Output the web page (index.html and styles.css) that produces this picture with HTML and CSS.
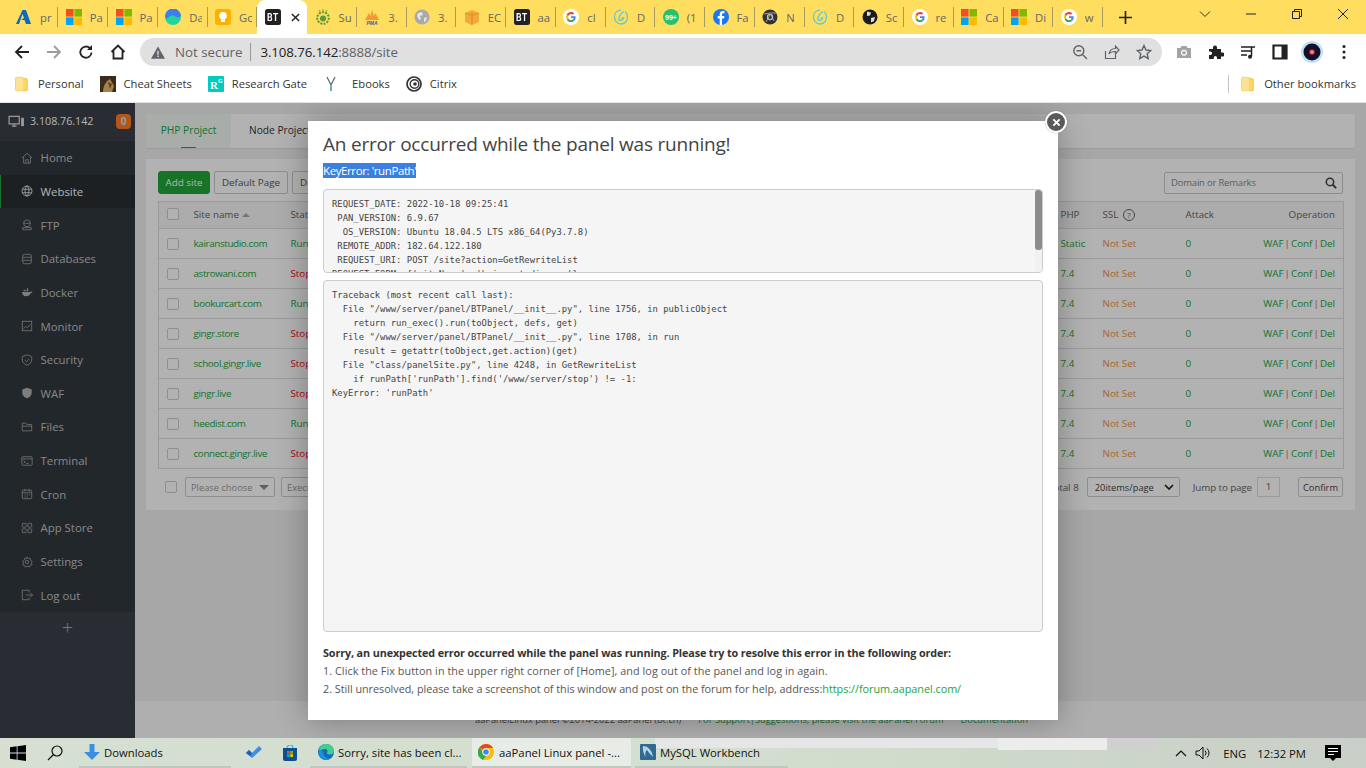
FILE: index.html
```html
<!DOCTYPE html>
<html lang="en">
<head>
<meta charset="utf-8">
<title>aaPanel Linux panel</title>
<link rel="stylesheet" href="styles.css">
</head>
<body>
<svg class="defs" width="0" height="0" aria-hidden="true">
  <symbol id="ms" viewBox="0 0 16 16"><rect x="0" y="0" width="7.6" height="7.6" fill="#f25022"/><rect x="8.4" y="0" width="7.6" height="7.6" fill="#7fba00"/><rect x="0" y="8.4" width="7.6" height="7.6" fill="#00a4ef"/><rect x="8.4" y="8.4" width="7.6" height="7.6" fill="#ffb900"/></symbol>
  <symbol id="google" viewBox="0 0 16 16"><circle cx="8" cy="8" r="8" fill="#fff"/><path d="M12.6 8.2c0-.4 0-.7-.1-1H8v1.9h2.6c-.1.7-.5 1.200-1 1.600l1.500 1.200c.9-.8 1.500-2.100 1.500-3.700z" fill="#4285f4"/><path d="M8 13c1.300 0 2.400-.4 3.100-1.100L9.600 10.700c-.4.300-1 .5-1.600.5-1.300 0-2.300-.8-2.700-2l-1.600 1.200C4.500 12 6.100 13 8 13z" fill="#34a853"/><path d="M5.300 9.200c-.2-.7-.2-1.500 0-2.200L3.700 5.700c-.7 1.400-.7 3.200 0 4.600z" fill="#fbbc05"/><path d="M8 5c.7 0 1.300.2 1.800.7l1.400-1.400C10.300 3.500 9.200 3 8 3 6.100 3 4.500 4.100 3.700 5.700L5.300 7C5.700 5.800 6.700 5 8 5z" fill="#ea4335"/></symbol>
  <symbol id="bt" viewBox="0 0 16 16"><rect width="16" height="16" rx="2.500" fill="#222"/><path d="M2.500 4v8h2.800c1.200 0 1.900-.8 1.900-2.100 0-1-.4-1.600-1-1.900.5-.3.800-.8.800-1.800C7 4.800 6.300 4 5.200 4zM3.800 5.200h1.200c.5 0 .8.400.8 1s-.3 1.200-.8 1.200H3.800zm0 3.400h1.300c.6 0 .9.400.9 1.200 0 .7-.3 1.100-.9 1.100H3.800zM8 4v1.200h1.900V12h1.300V5.200h1.900V4z" fill="#fff"/></symbol>
  <symbol id="teal" viewBox="0 0 16 16"><path d="M8 1.200C4 1.200 1.500 4.200 1.500 8S4.200 15 8 15s6.500-3 6.500-7c0-2.200-1-4.200-2.500-5.500" fill="none" stroke="#65c9cf" stroke-width="1.300"/><path d="M10.800 2.500C7.800 4.500 5.600 7.500 6 11c1.800 1 4 .3 4.500-2.200L8.500 9.600" fill="none" stroke="#65c9cf" stroke-width="1.300"/></symbol>
  <symbol id="folder" viewBox="0 0 14 18"><path d="M.5 2.500a1 1 0 0 1 1-1h7l1 1.500h3a1 1 0 0 1 1 1v11.500a1 1 0 0 1-1 1h-11a1 1 0 0 1-1-1z" fill="#fdd663" stroke="#e8c04a"/><path d="M.5 1.500h8v15h-8z" fill="#fde293"/></symbol>
</svg>

<header class="tabstrip">
  <div class="tab"><svg class="fav" viewBox="0 0 16 16"><path d="M6.500 1h3.500l5 14H10L8.500 11H5l3-2-1.500-4L3 15H0z" fill="#0c68c4"/></svg><span class="tab-t">pr</span></div>
  <div class="tab"><svg class="fav"><use href="#ms"/></svg><span class="tab-t">Pa</span></div>
  <div class="tab"><svg class="fav"><use href="#ms"/></svg><span class="tab-t">Pa</span></div>
  <div class="tab"><svg class="fav" viewBox="0 0 16 16"><circle cx="8" cy="8" r="8" fill="#22d39b"/><path d="M0 8a8 8 0 0 1 16-1c-2 1.500-3.500 2-5.500.5S6 6 4 8s-3 1.500-4 0z" fill="#3f7ef0"/></svg><span class="tab-t">Da</span></div>
  <div class="tab"><svg class="fav" viewBox="0 0 16 16"><rect width="16" height="16" rx="3" fill="#fbb100"/><circle cx="8" cy="6.800" r="3.800" fill="#fff"/><rect x="6" y="10.500" width="4" height="2.500" fill="#fff"/></svg><span class="tab-t">Gc</span></div>
  <div class="tab active"><svg class="fav"><use href="#bt"/></svg><svg class="tab-x" viewBox="0 0 10 10"><path d="M1 1l8 8M9 1l-8 8" stroke="#222" stroke-width="1.600"/></svg></div>
  <div class="tab"><svg class="fav" viewBox="0 0 16 16"><circle cx="8" cy="9" r="5.800" fill="none" stroke="#5a9a3a" stroke-width="2" stroke-dasharray="2 1.200"/><circle cx="8" cy="9.500" r="3" fill="#5a9a3a"/><path d="M4 1l2 3M8 0v4M12 1l-2 3" stroke="#7ab648" stroke-width="1.200"/></svg><span class="tab-t">Su</span></div>
  <div class="tab"><svg class="fav" viewBox="0 0 16 16"><path d="M1 11L5 4l1.500 3L8 1l2 6 1.500-3 3.500 7z" fill="#f4973b"/><text class="pma" x="8" y="15.500">PMA</text></svg><span class="tab-t">3.</span></div>
  <div class="tab"><svg class="fav" viewBox="0 0 16 16"><circle cx="8" cy="8" r="7.500" fill="#a9a9a9"/><path d="M4 4l4-1 1 3-3 1 1 3-2 1-2-4zM10 9l3-1-1 4-2 1z" fill="#e4e4e4"/></svg><span class="tab-t">3.</span></div>
  <div class="tab"><svg class="fav" viewBox="0 0 16 16"><path d="M1 4l7-3 7 3v9l-7 3-7-3z" fill="#f2a93b"/><path d="M8 4v12" stroke="#d98a1d" stroke-width="1"/><path d="M1 4l7 2.500L15 4" fill="none" stroke="#d98a1d" stroke-width=".8"/></svg><span class="tab-t">EC</span></div>
  <div class="tab"><svg class="fav"><use href="#bt"/></svg><span class="tab-t">aa</span></div>
  <div class="tab"><svg class="fav"><use href="#google"/></svg><span class="tab-t">cl</span></div>
  <div class="tab"><svg class="fav"><use href="#teal"/></svg><span class="tab-t">D</span></div>
  <div class="tab"><svg class="fav" viewBox="0 0 16 16"><circle cx="8" cy="8" r="8" fill="#25c16f"/><text class="fav-99" x="8" y="10.500">99+</text></svg><span class="tab-t">(1</span></div>
  <div class="tab"><svg class="fav" viewBox="0 0 16 16"><circle cx="8" cy="8" r="8" fill="#1877f2"/><path d="M9 16V9.500h2l.4-2.500H9V5.500C9 4.800 9.300 4.300 10.300 4.300h1.200V2.200C11.200 2.100 10.500 2 9.800 2 8 2 6.700 3.100 6.700 5.200V7H4.700v2.500h2V16z" fill="#fff"/></svg><span class="tab-t">Fa</span></div>
  <div class="tab"><svg class="fav" viewBox="0 0 16 16"><circle cx="8" cy="8" r="7.500" fill="#333"/><circle cx="8" cy="8" r="3.200" fill="#bbb"/><circle cx="8" cy="8" r="2" fill="#333"/><path d="M2 5l6-1h6M4 13l4-7M12 12l-3-6" stroke="#bbb" stroke-width=".8" fill="none"/></svg><span class="tab-t">N</span></div>
  <div class="tab"><svg class="fav"><use href="#teal"/></svg><span class="tab-t">D</span></div>
  <div class="tab"><svg class="fav" viewBox="0 0 16 16"><circle cx="8" cy="8" r="7.500" fill="#1c1c1c"/><path d="M5 2.500l4 1-1 3-3 .5zM9 9l4-1-1 4-3 1.500z" fill="#ddd"/></svg><span class="tab-t">Sc</span></div>
  <div class="tab"><svg class="fav"><use href="#google"/></svg><span class="tab-t">re</span></div>
  <div class="tab"><svg class="fav"><use href="#ms"/></svg><span class="tab-t">Ca</span></div>
  <div class="tab"><svg class="fav"><use href="#ms"/></svg><span class="tab-t">Di</span></div>
  <div class="tab"><svg class="fav"><use href="#google"/></svg><span class="tab-t">w</span></div>
  <svg class="newtab" viewBox="0 0 14 14"><path d="M7 0v14M0 7h14" stroke="#222" stroke-width="1.800"/></svg>
  <div class="winctl">
    <svg class="wc" viewBox="0 0 12 12"><path d="M1 3.500l5 5 5-5" fill="none" stroke="#333" stroke-width="1"/></svg>
    <svg class="wc" viewBox="0 0 12 12"><path d="M1 6h10" stroke="#222" stroke-width="1"/></svg>
    <svg class="wc" viewBox="0 0 12 12"><path d="M1.500 3.500h7v7h-7zM3.500 3.500v-2h7v7h-2" fill="none" stroke="#222" stroke-width="1"/></svg>
    <svg class="wc" viewBox="0 0 12 12"><path d="M1 1l10 10M11 1L1 11" stroke="#222" stroke-width="1"/></svg>
  </div>
</header>

<nav class="toolbar">
  <svg class="tb" viewBox="0 0 16 16"><path d="M15 8H2M8 2L2 8l6 6" fill="none" stroke="#222" stroke-width="1.800"/></svg>
  <svg class="tb" viewBox="0 0 16 16"><path d="M1 8h13M8 2l6 6-6 6" fill="none" stroke="#9c9c9c" stroke-width="1.800"/></svg>
  <svg class="tb" viewBox="0 0 16 16"><path d="M13.500 8.500a5.600 5.600 0 1 1-1.600-4.300" fill="none" stroke="#222" stroke-width="1.800"/><path d="M14 1v5H9z" fill="#222"/></svg>
  <svg class="tb" viewBox="0 0 16 16"><path d="M1.500 8L8 1.500 14.500 8M3.500 7v7.500h9V7" fill="none" stroke="#222" stroke-width="1.800"/></svg>
  <div class="omnibox">
    <svg class="warn" viewBox="0 0 16 14"><path d="M8 0l8 14H0z" fill="#5f6368"/><path d="M7.200 5h1.600v4.500H7.200zM7.200 10.500h1.600V12H7.200z" fill="#e0e0e0"/></svg>
    <span class="ns">Not secure</span>
    <span class="sep"></span>
    <span class="url"><b class="host">3.108.76.142</b>:8888/site</span>
    <span class="grow"></span>
    <svg class="om" viewBox="0 0 16 16"><circle cx="6.800" cy="6.800" r="5" fill="none" stroke="#5f6368" stroke-width="1.400"/><path d="M10.500 10.500L15 15M4.500 6.800h4.600" stroke="#5f6368" stroke-width="1.400"/></svg>
    <svg class="om" viewBox="0 0 16 16"><path d="M1.500 7v7.500h10V10M5 10c.5-3.500 3-5.500 6.500-5.500V2L15 6l-3.500 4V7.500C9 7.500 6.500 8 5 10z" fill="none" stroke="#5f6368" stroke-width="1.200"/></svg>
    <svg class="om" viewBox="0 0 16 16"><path d="M8 1.500l2 4.500 4.800.5-3.600 3.200 1 4.800L8 12.100l-4.200 2.400 1-4.800L1.200 6.500 6 6z" fill="none" stroke="#5f6368" stroke-width="1.400"/></svg>
  </div>
  <div class="exts">
    <svg class="ex" viewBox="0 0 16 16"><path d="M1 4h3.500l1-2h5l1 2H15v10H1z" fill="#a3a3a3"/><circle cx="8" cy="8.800" r="3" fill="#fff"/><circle cx="8" cy="8.800" r="1.800" fill="#a3a3a3"/></svg>
    <svg class="ex" viewBox="0 0 16 16"><path d="M1 5h4V3.500a2 2 0 0 1 4 0V5h4v3.500h1.500a2 2 0 0 1 0 4H13V15H9v-1.500a1.600 1.600 0 0 0-3.200 0V15H1v-4h1.300a1.800 1.800 0 0 0 0-3.600H1z" fill="#202124"/></svg>
    <svg class="ex" viewBox="0 0 16 16"><path d="M1 3h10M1 7h10M1 11h6" stroke="#202124" stroke-width="1.500"/><path d="M11.500 12.500V3H15" fill="none" stroke="#202124" stroke-width="1.500"/><circle cx="10" cy="12.800" r="2" fill="#202124"/></svg>
    <svg class="ex" viewBox="0 0 16 16"><path d="M1.500 1.500h13v13h-13z" fill="#fff" stroke="#202124" stroke-width="2.200"/><path d="M9.500 1.500h5v13h-5z" fill="#202124"/></svg>
    <svg class="ex" viewBox="0 0 22 22"><circle cx="11" cy="11" r="11" fill="#bfe0f5"/><circle cx="11" cy="11" r="8.500" fill="#15102a"/><circle cx="11" cy="11" r="2.600" fill="#f04a4a"/><circle cx="11" cy="11" r=".8" fill="#fff"/></svg>
    <svg class="ex" viewBox="0 0 16 16"><circle cx="8" cy="2.500" r="1.500" fill="#202124"/><circle cx="8" cy="8" r="1.500" fill="#202124"/><circle cx="8" cy="13.500" r="1.500" fill="#202124"/></svg>
  </div>
</nav>

<nav class="bookmarks">
  <a class="bm"><svg class="bm-i"><use href="#folder"/></svg>Personal</a>
  <a class="bm"><svg class="bm-i" viewBox="0 0 16 16"><rect width="16" height="16" fill="#3a2c1c"/><path d="M3 16c0-6 3-11 7-13l4 7-2 6z" fill="#a88148"/><path d="M8 6l4 2-2 5z" fill="#5e4526"/></svg>Cheat Sheets</a>
  <a class="bm"><svg class="bm-i" viewBox="0 0 16 16"><rect width="16" height="16" rx="1" fill="#00ccbb"/><text class="rg" x="2" y="13">R</text><text class="rg-s" x="10" y="7">G</text></svg>Research Gate</a>
  <a class="bm bm-v"><svg class="bm-i" viewBox="0 0 16 16"><path d="M4 1l4 8 4-8M8 9v6" fill="none" stroke="#566" stroke-width="1.200"/><path d="M8 11v4" stroke="#4ab0d9" stroke-width="1.500"/></svg>Ebooks</a>
  <a class="bm"><svg class="bm-i" viewBox="0 0 16 16"><circle cx="8" cy="8" r="7" fill="none" stroke="#333" stroke-width="1.700"/><circle cx="8.500" cy="8" r="4.300" fill="none" stroke="#333" stroke-width="1.400"/><circle cx="9" cy="8" r="1.800" fill="#333"/></svg>Citrix</a>
  <span class="grow"></span>
  <span class="bm-sep"></span>
  <a class="bm bm-other"><svg class="bm-i"><use href="#folder"/></svg>Other bookmarks</a>
</nav>

<div class="page">
  <aside class="sidebar">
    <div class="side-head">
      <svg class="side-mon" viewBox="0 0 18 14"><path d="M1 1.500h11v8H1zM4 12h5M6.500 9.500V12" fill="none" stroke="#ddd" stroke-width="1.300"/><path d="M14 3h3v9h-3z" fill="#ddd"/></svg>
      <span class="side-ip">3.108.76.142</span>
      <span class="badge">0</span>
    </div>
    <ul class="menu">
      <li class="mi"><svg class="mi-i" viewBox="0 0 14 14"><path d="M1 7l6-5.500L13 7M3 6v7h8V6M5.500 13V9h3v4"/></svg>Home</li>
      <li class="mi on"><svg class="mi-i" viewBox="0 0 14 14"><circle cx="7" cy="7" r="5.800"/><path d="M1.500 5h11M1.500 9h11M7 1c-3 3-3 9 0 12M7 1c3 3 3 9 0 12"/></svg>Website</li>
      <li class="mi"><svg class="mi-i" viewBox="0 0 14 14"><circle cx="7" cy="5" r="4"/><path d="M3 5h8M2 10h10v2.500H2zM7 9v1"/></svg>FTP</li>
      <li class="mi"><svg class="mi-i" viewBox="0 0 14 14"><rect x="2" y="1.500" width="10" height="11" rx="2"/><path d="M2 5h10M2 8.500h10"/></svg>Databases</li>
      <li class="mi"><svg class="mi-i solid" viewBox="0 0 14 14"><path d="M1 7h10.500c.5-.8 1-1 1.800-.8-.3 1.500-1 2-1.800 2-1 2.500-3 3.800-6 3.800C3 12 1.500 10 1 7z"/><path d="M3 4.500h1.500V6H3zM5 4.500h1.500V6H5zM7 4.500h1.500V6H7zM7 2.500h1.500V4H7z"/></svg>Docker</li>
      <li class="mi"><svg class="mi-i" viewBox="0 0 14 14"><rect x="1.500" y="1.500" width="11" height="11"/><path d="M3 10l2.500-2.500 2 1.500L11 5"/></svg>Monitor</li>
      <li class="mi"><svg class="mi-i" viewBox="0 0 14 14"><path d="M7 1l5.500 2v4c0 3-2.500 5-5.500 6-3-1-5.500-3-5.500-6V3z"/><path d="M4.500 6.800L6.500 9l3-3.500"/></svg>Security</li>
      <li class="mi"><svg class="mi-i solid" viewBox="0 0 14 14"><path d="M7 .8l5.500 2v4.200c0 3-2.500 5-5.500 6.200-3-1.200-5.500-3.200-5.500-6.200V2.800z"/></svg>WAF</li>
      <li class="mi"><svg class="mi-i" viewBox="0 0 14 14"><path d="M1.500 11.500v-9h4l1.500 1.500h5.500v7.500zM1.500 6h11"/></svg>Files</li>
      <li class="mi"><svg class="mi-i" viewBox="0 0 14 14"><rect x="1" y="2" width="12" height="10" rx="1"/><path d="M1 4.500h12M3 6.500l2 1.500-2 1.500M6 10h3"/></svg>Terminal</li>
      <li class="mi"><svg class="mi-i" viewBox="0 0 14 14"><rect x="1.500" y="2.500" width="11" height="10" rx="1"/><path d="M1.500 5.500h11M4.500 1v3M9.500 1v3M4 8h1.500M6.500 8H8M9 8h1.500M4 10.500h1.500M6.500 10.500H8"/></svg>Cron</li>
      <li class="mi"><svg class="mi-i" viewBox="0 0 14 14"><rect x="1.500" y="1.500" width="4.500" height="4.500" rx=".8"/><rect x="8" y="1.500" width="4.500" height="4.500" rx=".8"/><rect x="1.500" y="8" width="4.500" height="4.500" rx=".8"/><rect x="8" y="8" width="4.500" height="4.500" rx=".8"/></svg>App Store</li>
      <li class="mi"><svg class="mi-i" viewBox="0 0 14 14"><path d="M7 1l1.300 1.800 2.200-.3.600 2.200 1.900 1.300-1 2 1 2-2.100.6-.8 2.100L7 12l-2 1-.9-2.100L2 10.300l.9-2.100-1-2 1.900-1.300.6-2.200 2.200.3z"/><circle cx="7" cy="7" r="2"/></svg>Settings</li>
      <li class="mi"><svg class="mi-i" viewBox="0 0 14 14"><path d="M9.500 4V1.500h-8v11h8V10M5.500 7h8M11 4.500L13.500 7 11 9.500"/></svg>Log out</li>
    </ul>
    <div class="side-add">+</div>
  </aside>

  <main class="main">
    <div class="content">
      <div class="ptabs">
        <span class="ptab on">PHP Project</span>
        <span class="ptab">Node Project</span>
      </div>
      <section class="panel">
        <div class="ctrl">
          <button class="btn primary">Add site</button>
          <button class="btn">Default Page</button>
          <button class="btn">Default Site</button>
          <span class="grow"></span>
          <div class="search"><span>Domain or Remarks</span><svg class="search-i" viewBox="0 0 14 14"><circle cx="5.800" cy="5.800" r="4.300" fill="none" stroke="#444" stroke-width="1.800"/><path d="M9 9l4 4" stroke="#444" stroke-width="2.200"/></svg></div>
        </div>
        <table class="sites">
          <colgroup><col class="c1"><col class="c2"><col class="c3"><col class="c4"><col class="c5"><col class="c6"><col class="c7"></colgroup>
          <thead>
            <tr><th><span class="cb"></span></th><th>Site name <span class="sort"></span></th><th>Status</th><th>PHP</th><th>SSL <span class="q">?</span></th><th>Attack</th><th class="r">Operation</th></tr>
          </thead>
          <tbody>
            <tr><td><span class="cb"></span></td><td class="g">kairanstudio.com</td><td class="g">Running</td><td class="g">Static</td><td class="o">Not Set</td><td class="g">0</td><td class="r g">WAF <i>|</i> Conf <i>|</i> Del</td></tr>
            <tr><td><span class="cb"></span></td><td class="g">astrowani.com</td><td class="red">Stopped</td><td class="g">7.4</td><td class="o">Not Set</td><td class="g">0</td><td class="r g">WAF <i>|</i> Conf <i>|</i> Del</td></tr>
            <tr><td><span class="cb"></span></td><td class="g">bookurcart.com</td><td class="g">Running</td><td class="g">7.4</td><td class="o">Not Set</td><td class="g">0</td><td class="r g">WAF <i>|</i> Conf <i>|</i> Del</td></tr>
            <tr><td><span class="cb"></span></td><td class="g">gingr.store</td><td class="red">Stopped</td><td class="g">7.4</td><td class="o">Not Set</td><td class="g">0</td><td class="r g">WAF <i>|</i> Conf <i>|</i> Del</td></tr>
            <tr><td><span class="cb"></span></td><td class="g">school.gingr.live</td><td class="red">Stopped</td><td class="g">7.4</td><td class="o">Not Set</td><td class="g">0</td><td class="r g">WAF <i>|</i> Conf <i>|</i> Del</td></tr>
            <tr><td><span class="cb"></span></td><td class="g">gingr.live</td><td class="red">Stopped</td><td class="g">7.4</td><td class="o">Not Set</td><td class="g">0</td><td class="r g">WAF <i>|</i> Conf <i>|</i> Del</td></tr>
            <tr><td><span class="cb"></span></td><td class="g">heedist.com</td><td class="g">Running</td><td class="g">7.4</td><td class="o">Not Set</td><td class="g">0</td><td class="r g">WAF <i>|</i> Conf <i>|</i> Del</td></tr>
            <tr><td><span class="cb"></span></td><td class="g">connect.gingr.live</td><td class="red">Stopped</td><td class="g">7.4</td><td class="o">Not Set</td><td class="g">0</td><td class="r g">WAF <i>|</i> Conf <i>|</i> Del</td></tr>
          </tbody>
        </table>
        <div class="pager">
          <span class="cb pager-cb"></span>
          <span class="sel choose">Please choose<span class="caret"></span></span>
          <span class="sel exec">Execute</span>
          <span class="grow"></span>
          <span class="total">Total 8</span>
          <span class="sel per">20items/page<svg class="chev" viewBox="0 0 10 6"><path d="M1 1l4 4 4-4" fill="none" stroke="#222" stroke-width="1.700"/></svg></span>
          <span class="jump">Jump to page</span>
          <span class="pg">1</span>
          <span class="btn confirm">Confirm</span>
        </div>
      </section>
    </div>
    <footer class="foot">
      <span>aaPanelLinux panel ©2014-2022 aaPanel (bt.cn)</span>
      <a class="g">For Support|Suggestions, please visit the aaPanel Forum</a>
      <a class="g">Documentation</a>
    </footer>
  </main>

  <div class="shade"></div>

  <div class="modal">
    <button class="close" aria-label="Close"><svg viewBox="0 0 10 10"><path d="M1.500 1.500l7 7M8.500 1.500l-7 7" stroke="#fff" stroke-width="2"/></svg></button>
    <h1 class="m-title">An error occurred while the panel was running!</h1>
    <p class="m-key"><mark class="m-sel">KeyError: 'runPath'</mark></p>
    <div class="pre pre-a">
<pre class="code">REQUEST_DATE: 2022-10-18 09:25:41
 PAN_VERSION: 6.9.67
  OS_VERSION: Ubuntu 18.04.5 LTS x86_64(Py3.7.8)
 REMOTE_ADDR: 182.64.122.180
 REQUEST_URI: POST /site?action=GetRewriteList
REQUEST_FORM: {'siteName': 'kairanstudio.com'}</pre>
      <div class="scroll"><div class="thumb"></div></div>
    </div>
    <div class="pre pre-b">
<pre class="code">Traceback (most recent call last):
  File "/www/server/panel/BTPanel/__init__.py", line 1756, in publicObject
    return run_exec().run(toObject, defs, get)
  File "/www/server/panel/BTPanel/__init__.py", line 1708, in run
    result = getattr(toObject,get.action)(get)
  File "class/panelSite.py", line 4248, in GetRewriteList
    if runPath['runPath'].find('/www/server/stop') != -1:
KeyError: 'runPath'</pre>
    </div>
    <div class="m-help">
      <p class="strong">Sorry, an unexpected error occurred while the panel was running. Please try to resolve this error in the following order:</p>
      <p class="line2">1. Click the Fix button in the upper right corner of [Home], and log out of the panel and log in again.</p>
      <p class="line3">2. Still unresolved, please take a screenshot of this window and post on the forum for help, address:<a class="m-link">https://forum.aapanel.com/</a></p>
    </div>
  </div>
</div>

<footer class="taskbar">
  <div class="tk win"><svg class="tk-i" viewBox="0 0 16 16"><path d="M0 2.300l6.700-1v6.300H0zM7.500 1.200L16 0v7.600H7.500zM0 8.400h6.700v6.300l-6.700-1zM7.500 8.400H16V16l-8.500-1.200z" fill="#000"/></svg></div>
  <div class="tk srch"><svg class="tk-i" viewBox="0 0 16 16"><circle cx="10" cy="6" r="5" fill="none" stroke="#111" stroke-width="1.200"/><path d="M6.500 9.500L1 15" stroke="#111" stroke-width="1.300"/></svg></div>
  <div class="tk dl"><svg class="tk-i" viewBox="0 0 16 16"><path d="M5.500 0h5v8H16l-8 8-8-8h5.500z" fill="#3b8fe0"/></svg>Downloads</div>
  <div class="tk pin"><svg class="tk-i" viewBox="0 0 16 16"><path d="M0 8l3-3 3 3 7-7 3 3-10 9z" fill="#3b8fe0"/><path d="M0 8l3-3 3 3-2 3z" fill="#1d5fb8"/></svg></div>
  <div class="tk pin"><svg class="tk-i" viewBox="0 0 16 16"><path d="M1 3h14v11a2 2 0 0 1-2 2H3a2 2 0 0 1-2-2z" fill="#0f4f8f"/><path d="M5 3a3 3 0 0 1 6 0" fill="none" stroke="#38b6d8" stroke-width="1.200"/><rect x="5" y="6" width="2.800" height="2.800" fill="#f25022"/><rect x="8.200" y="6" width="2.800" height="2.800" fill="#7fba00"/><rect x="5" y="9.200" width="2.800" height="2.800" fill="#00a4ef"/><rect x="8.200" y="9.200" width="2.800" height="2.800" fill="#ffb900"/></svg></div>
  <div class="tk app edge"><svg class="tk-i" viewBox="0 0 16 16"><circle cx="8" cy="8" r="8" fill="#0f6cbd"/><path d="M1 6C2 2 5 0 8 0c4.500 0 8 3 8 7 0 2.500-2 3.500-4 3.500-1.500 0-3-.5-3.200-1.300C10 8 10 5 7 5 4 5 2 7 1 6z" fill="#3fd08f"/><path d="M5.500 9c0 3 3 6 6.500 5.500-2 1.500-5 2-7.500.5S.5 10 1 7c.5-1.500 3-2 4.500 2z" fill="#1a90d9"/></svg>Sorry, site has been cl...</div>
  <div class="tk app chrome"><svg class="tk-i" viewBox="0 0 16 16"><circle cx="8" cy="8" r="8" fill="#fbbc05"/><path d="M8 0a8 8 0 0 1 7 4H8a4 4 0 0 0-3.500 2L1.800 3A8 8 0 0 1 8 0z" fill="#ea4335"/><path d="M1.800 3l3.500 6.500A4 4 0 0 0 8 12l-3 4A8 8 0 0 1 1.800 3z" fill="#34a853"/><circle cx="8" cy="8" r="3.700" fill="#fff"/><circle cx="8" cy="8" r="2.800" fill="#4285f4"/></svg>aaPanel Linux panel -...</div>
  <div class="tk app mysql"><svg class="tk-i" viewBox="0 0 16 16"><rect width="16" height="16" rx="1" fill="#2e6a92"/><path d="M3 2c5 0 9 4 10 11-3-3-4-4-6-7-1.500 1-2 3-1.500 7C3 9 2.500 5 3 2z" fill="#b8d0e0"/></svg>MySQL Workbench</div>
  <span class="grow"></span>
  <div class="tray">
    <svg class="tr-up" viewBox="0 0 12 8"><path d="M1 7l5-5 5 5" fill="none" stroke="#111" stroke-width="1.200"/></svg>
    <svg class="tr-sp" viewBox="0 0 16 16"><path d="M1 6h3l4-4v12l-4-4H1z" fill="none" stroke="#111"/><path d="M10 5.500a3.500 3.500 0 0 1 0 5M12 3.500a6 6 0 0 1 0 9" fill="none" stroke="#111"/></svg>
    <span class="eng">ENG</span>
    <span class="clock">12:32 PM</span>
    <svg class="tr-n" viewBox="0 0 16 16"><path d="M0 0h16v13h-5l-3 3-3-3H0z" fill="#000"/><path d="M3 3.500h10M3 6.500h10M3 9.500h6" stroke="#fff"/></svg>
  </div>
  <div class="strip"><span class="s1"></span><span class="s2"></span><span class="s3"></span></div>
</footer>
</body>
</html>
```

FILE: styles.css
```css
* { box-sizing: border-box; }
html, body { margin: 0; padding: 0; height: 768px; overflow: hidden; }
body { font-family: "Open Sans", "Noto Sans", sans-serif; background: #fff; color: #333; }
.defs { position: absolute; }
.grow { flex: 1; }
p, h1, ul { margin: 0; padding: 0; }

/* chrome tabs */
.tabstrip { display: flex; align-items: stretch; height: 34px; padding-left: 8.500px; background: #ffdd5f; }
.tab { position: relative; width: 49.750px; display: flex; align-items: center; padding: 0 0 0 7.500px; overflow: hidden; }
.tab:not(.active)::after { content: ""; position: absolute; right: 0; top: 7px; height: 20px; width: 1px; background: #a89a5e; }
.tab.active { background: #fff; border-radius: 8px 8px 0 0; padding-left: 8px; }
.fav { width: 16px; height: 16px; flex: none; }
.fav-99 { font: 700 7px "Liberation Sans", sans-serif; fill: #fff; text-anchor: middle; }
.pma { font: italic 700 5px "Liberation Sans", sans-serif; fill: #3a5da8; text-anchor: middle; }
.tab-t { margin-left: 8px; font-size: 11.300px; color: #666; white-space: nowrap; overflow: hidden; width: 13px; }
.tab-x { width: 9px; height: 9px; margin-left: 10px; }
.newtab { width: 13px; height: 13px; margin: 11px 0 0 16px; }
.winctl { margin-left: auto; display: flex; align-items: flex-start; padding: 8px 17px 0 0; gap: 34px; }
.wc { width: 12px; height: 12px; }

/* toolbar */
.toolbar { display: flex; align-items: center; height: 34px; padding: 2px 14px 0 14px; background: #fff; }
.tb { width: 16px; height: 16px; margin-right: 16px; }
.toolbar .tb:nth-child(4) { margin-right: 14px; }
.omnibox { display: flex; align-items: center; width: 1022px; height: 28px; padding: 0 10px 0 11px; border-radius: 14px; background: #e0e0e0; font-size: 13.300px; }
.warn { width: 14px; height: 13px; flex: none; }
.ns { margin-left: 10px; color: #5f6368; }
.sep { width: 1px; height: 18px; margin: 0 9px 0 8px; background: #9a9a9a; }
.url { color: #5f6368; letter-spacing: -.1px; }
.host { font-weight: 400; color: #202124; }
.om { width: 16px; height: 16px; margin-left: 16px; }
.exts { display: flex; align-items: center; margin-left: 14px; gap: 16px; }
.ex { width: 16px; height: 16px; }
.ex:nth-child(5) { width: 22px; height: 22px; margin: 0 -3px; }

/* bookmarks */
.bookmarks { display: flex; align-items: center; height: 35px; padding: 0 10px 3px 15px; background: #fff; font-size: 11.200px; color: #333; border-bottom: 1px solid #e3e3e3; }
.bm { display: flex; align-items: center; white-space: nowrap; margin-right: 16px; }
.bm-i { width: 16px; height: 16px; margin-right: 8px; flex: none; }
.bm-v .bm-i { margin-right: 13px; }
.bm:first-child .bm-i, .bm-other .bm-i { width: 13px; margin-right: 10px; }
.bm-other { margin-right: 0; }
.bm-sep { width: 1px; height: 18px; margin-right: 12px; background: #c4c4c4; }
.rg { font: 700 11px "Liberation Serif", serif; fill: #fff; }
.rg-s { font: 700 6px "Liberation Sans", sans-serif; fill: #fff; }

/* page */
.page { position: relative; display: flex; height: 635px; overflow: hidden; background: #f0f0f1; font-size: 11px; }
.sidebar { width: 135px; flex: none; display: flex; flex-direction: column; background: #3b4049; color: #d6d6d6; }
.side-head { display: flex; align-items: center; height: 38px; padding: 0 4px 2px 8px; }
.side-mon { width: 17px; height: 13px; }
.side-ip { margin-left: 5px; font-size: 10.700px; color: #fff; }
.badge { margin-left: auto; width: 15px; height: 15px; border-radius: 4px; background: #ff7d27; color: #ddd; font-weight: 700; font-size: 10px; line-height: 15px; text-align: center; }
.menu { list-style: none; height: 471px; display: flex; flex-direction: column; background: #32383f; }
.mi { flex: 1; display: flex; align-items: center; padding-left: 21px; font-size: 11.400px; color: #c2c2c2; }
.mi.on { background: #292e33; color: #fff; border-left: 1px solid #20a53a; padding-left: 20px; }
.mi-i { width: 12px; height: 12px; margin-right: 7.500px; flex: none; fill: none; stroke: #a3a3a3; stroke-width: 1; }
.mi-i.solid { fill: #b4b4b4; stroke: none; }
.mi.on .mi-i { stroke: #e8e8e8; }
.side-add { text-align: center; font-size: 20px; line-height: 32px; color: #a8a8a8; font-weight: 300; }

.main { flex: 1; min-width: 0; display: flex; flex-direction: column; }
.content { flex: 1; padding: 11px 11px 0; }
.ptabs { display: flex; height: 34px; background: #fff; border-radius: 3px; box-shadow: 0 1px 2px rgba(0,0,0,.08); }
.ptab { position: relative; width: 85px; line-height: 32px; text-align: center; font-size: 10.200px; color: #333; }
.ptab + .ptab { margin-left: 3px; text-align: left; padding-left: 15px; width: 110px; }
.ptab.on { color: #20a53a; background: #f1f8f3; border-radius: 3px 0 0 3px; }
.ptab.on::after { content: ""; position: absolute; left: 35px; bottom: 0; width: 15px; height: 1px; background: #20a53a; }
.panel { height: 351px; margin-top: 11px; padding: 12px 12px 0; background: #fff; }
.ctrl { display: flex; align-items: center; height: 23px; gap: 4px; }
.btn { height: 23px; padding: 0 7px; font: 400 9.800px "Open Sans", sans-serif; color: #555; background: #fff; border: 1px solid #ccc; border-radius: 2px; }
.btn.primary { width: 52px; padding: 0; background: #20a53a; border-color: #20a53a; color: #fff; border-radius: 3px; }
.search { display: flex; align-items: center; justify-content: space-between; width: 179px; height: 22px; padding: 0 5px 0 6px; border: 1px solid #ccc; border-radius: 2px; color: #888; font-size: 9.500px; letter-spacing: -.2px; }
.search-i { width: 12px; height: 12px; }

.sites { width: 1185px; margin-top: 7px; border-collapse: collapse; table-layout: fixed; font-size: 9.800px; border: 1px solid #ddd; }
.c1 { width: 35px; } .c2 { width: 97px; } .c3 { width: 770px; } .c4 { width: 42px; } .c5 { width: 83px; } .c6 { width: 60px; } .c7 { width: 98px; }
.sites th { height: 27px; padding: 0 0 2px; text-align: left; font-weight: 400; color: #666; background: #f6f6f6; border-bottom: 1px solid #ddd; white-space: nowrap; }
.sites td { height: 30px; padding: 0; border-bottom: 1px solid #ddd; white-space: nowrap; }
.sites td:nth-child(2) { letter-spacing: -.35px; }
.sites td.r { word-spacing: -1.500px; }
.sites th:first-child, .sites td:first-child { padding-left: 8px; }
.sites .r { text-align: right; padding-right: 8px; }
.cb { display: block; width: 12px; height: 12px; border: 1px solid #ccc; border-radius: 2px; background: #fff; }
.sort { display: inline-block; margin: 0 0 1px 1px; border: 4px solid transparent; border-top: 0; border-bottom-color: #aaa; }
.q { display: inline-block; width: 12px; height: 12px; margin-left: 2px; border: 1px solid #666; border-radius: 50%; font-size: 8px; line-height: 10px; text-align: center; }
.g { color: #20a53a; }
.red { color: #ef0808; }
.o { color: #ef9442; }
.sites i { font-style: normal; color: #d9534f; }

.pager { display: flex; align-items: center; height: 20px; margin-top: 8px; color: #666; font-size: 9.800px; }
.pager-cb { margin: 0 8px 0 7px; }
.sel { display: flex; align-items: center; height: 20px; padding: 0 5px; border: 1px solid #ccc; border-radius: 2px; color: #999; font-size: 9.300px; }
.choose { width: 90px; justify-content: space-between; }
.caret { border: 5px solid transparent; border-bottom: 0; border-top: 5px solid #888; }
.exec { width: 60px; margin-left: 6px; }
.per { width: 93px; margin-left: 8px; padding-left: 7px; color: #444; justify-content: space-between; }
.chev { width: 10px; height: 6px; }
.jump { margin-left: 13px; letter-spacing: -.1px; }
.pg { width: 23px; height: 20px; margin-left: 5px; line-height: 18px; text-align: center; border: 1px solid #ddd; }
.confirm { display: flex; align-items: center; justify-content: center; width: 45px; height: 20px; margin-left: 18px; padding: 0; color: #444; font-size: 9.300px; }

.foot { display: flex; justify-content: center; align-items: center; gap: 17px; height: 37px; padding-left: 2px; background: #fbfbfb; font-size: 9.300px; color: #555; }

/* modal overlay */
.shade { position: absolute; inset: 0; background: rgba(0,0,0,.3); }
.modal { position: absolute; left: 308px; top: 18px; width: 750px; height: 599px; padding: 0 15px; background: #fff; box-shadow: 0 0 30px rgba(0,0,0,.3); display: flex; flex-direction: column; }
.close { position: absolute; right: -9px; top: -10px; width: 22px; height: 22px; padding: 0; display: flex; align-items: center; justify-content: center; background: #5a5a5a; border: 2px solid #fff; border-radius: 50%; box-shadow: 0 0 1px rgba(0,0,0,.5); }
.close svg { width: 9px; height: 9px; }
.m-title { margin-top: 9px; font-size: 19px; line-height: 28px; font-weight: 400; color: #444; letter-spacing: -.2px; }
.m-key { margin-top: 5px; height: 16px; font-size: 11.500px; line-height: 16px; }
.m-sel { background: #3b7fe0; color: #fff; letter-spacing: -.4px; }
.pre { position: relative; overflow: hidden; background: #f5f5f5; border: 1px solid #ccc; border-radius: 4px; }
.pre-a { height: 84px; margin-top: 10px; }
.pre-b { height: 352px; margin-top: 7px; }
.code { margin: 0; padding: 7px 8px; font: 8.900px/14px "DejaVu Sans Mono", "Liberation Mono", monospace; color: #444; }
.scroll { position: absolute; right: 0; top: 0; bottom: 0; width: 7px; background: #f1f1f1; }
.thumb { height: 60px; background: #8c8c8c; border-radius: 3px; }
.m-help { margin-top: 12px; font-size: 10.800px; line-height: 18px; color: #555; }
.strong { font-weight: 700; color: #333; letter-spacing: -.12px; }
.line2 { letter-spacing: .06px; }
.line3 { letter-spacing: -.02px; }
.m-link { color: #20a53a; }

/* taskbar */
.taskbar { position: relative; display: flex; align-items: center; height: 30px; background: linear-gradient(90deg, #d6dfd2, #d3dfd0 50%, #cfdacb 70%, #c9cfc7); font-size: 11.300px; color: #111; }
.tk { position: relative; z-index: 1; display: flex; align-items: center; height: 30px; white-space: nowrap; }
.tk-i { width: 16px; height: 16px; flex: none; }
.win { width: 45px; padding-left: 10px; }
.srch { width: 34px; padding-left: 2px; }
.dl { width: 152px; padding-left: 5px; gap: 4px; border-bottom: 2px solid #c1c6bf; }
.pin { width: 36px; padding-left: 8px; }
.pin:nth-of-type(4) { margin-left: 7px; }
.app { gap: 4px; border-bottom: 2px solid #c1c6bf; }
.edge { width: 157px; padding-left: 8px; }
.chrome { width: 159px; margin-left: 5px; padding-left: 6px; background: #e7ece6; gap: 5px; }
.mysql { width: 153px; margin-left: 4px; padding-left: 5px; }
.tray { position: relative; z-index: 1; display: flex; align-items: center; height: 30px; padding-right: 25px; }
.tr-up { width: 12px; height: 8px; }
.tr-sp { width: 16px; height: 16px; margin-left: 8px; }
.eng { margin-left: 12px; }
.clock { margin-left: 11px; }
.tr-n { width: 16px; height: 16px; margin-left: 19px; }
.strip { position: absolute; left: 655px; top: 0; display: flex; align-items: flex-start; height: 12px; }
.s1 { width: 343px; height: 10px; background: #e6e6e6; }
.s2 { width: 109px; height: 12px; background: #ececec; }
.s3 { width: 48px; height: 12px; background: #d0d0d0; }
```
